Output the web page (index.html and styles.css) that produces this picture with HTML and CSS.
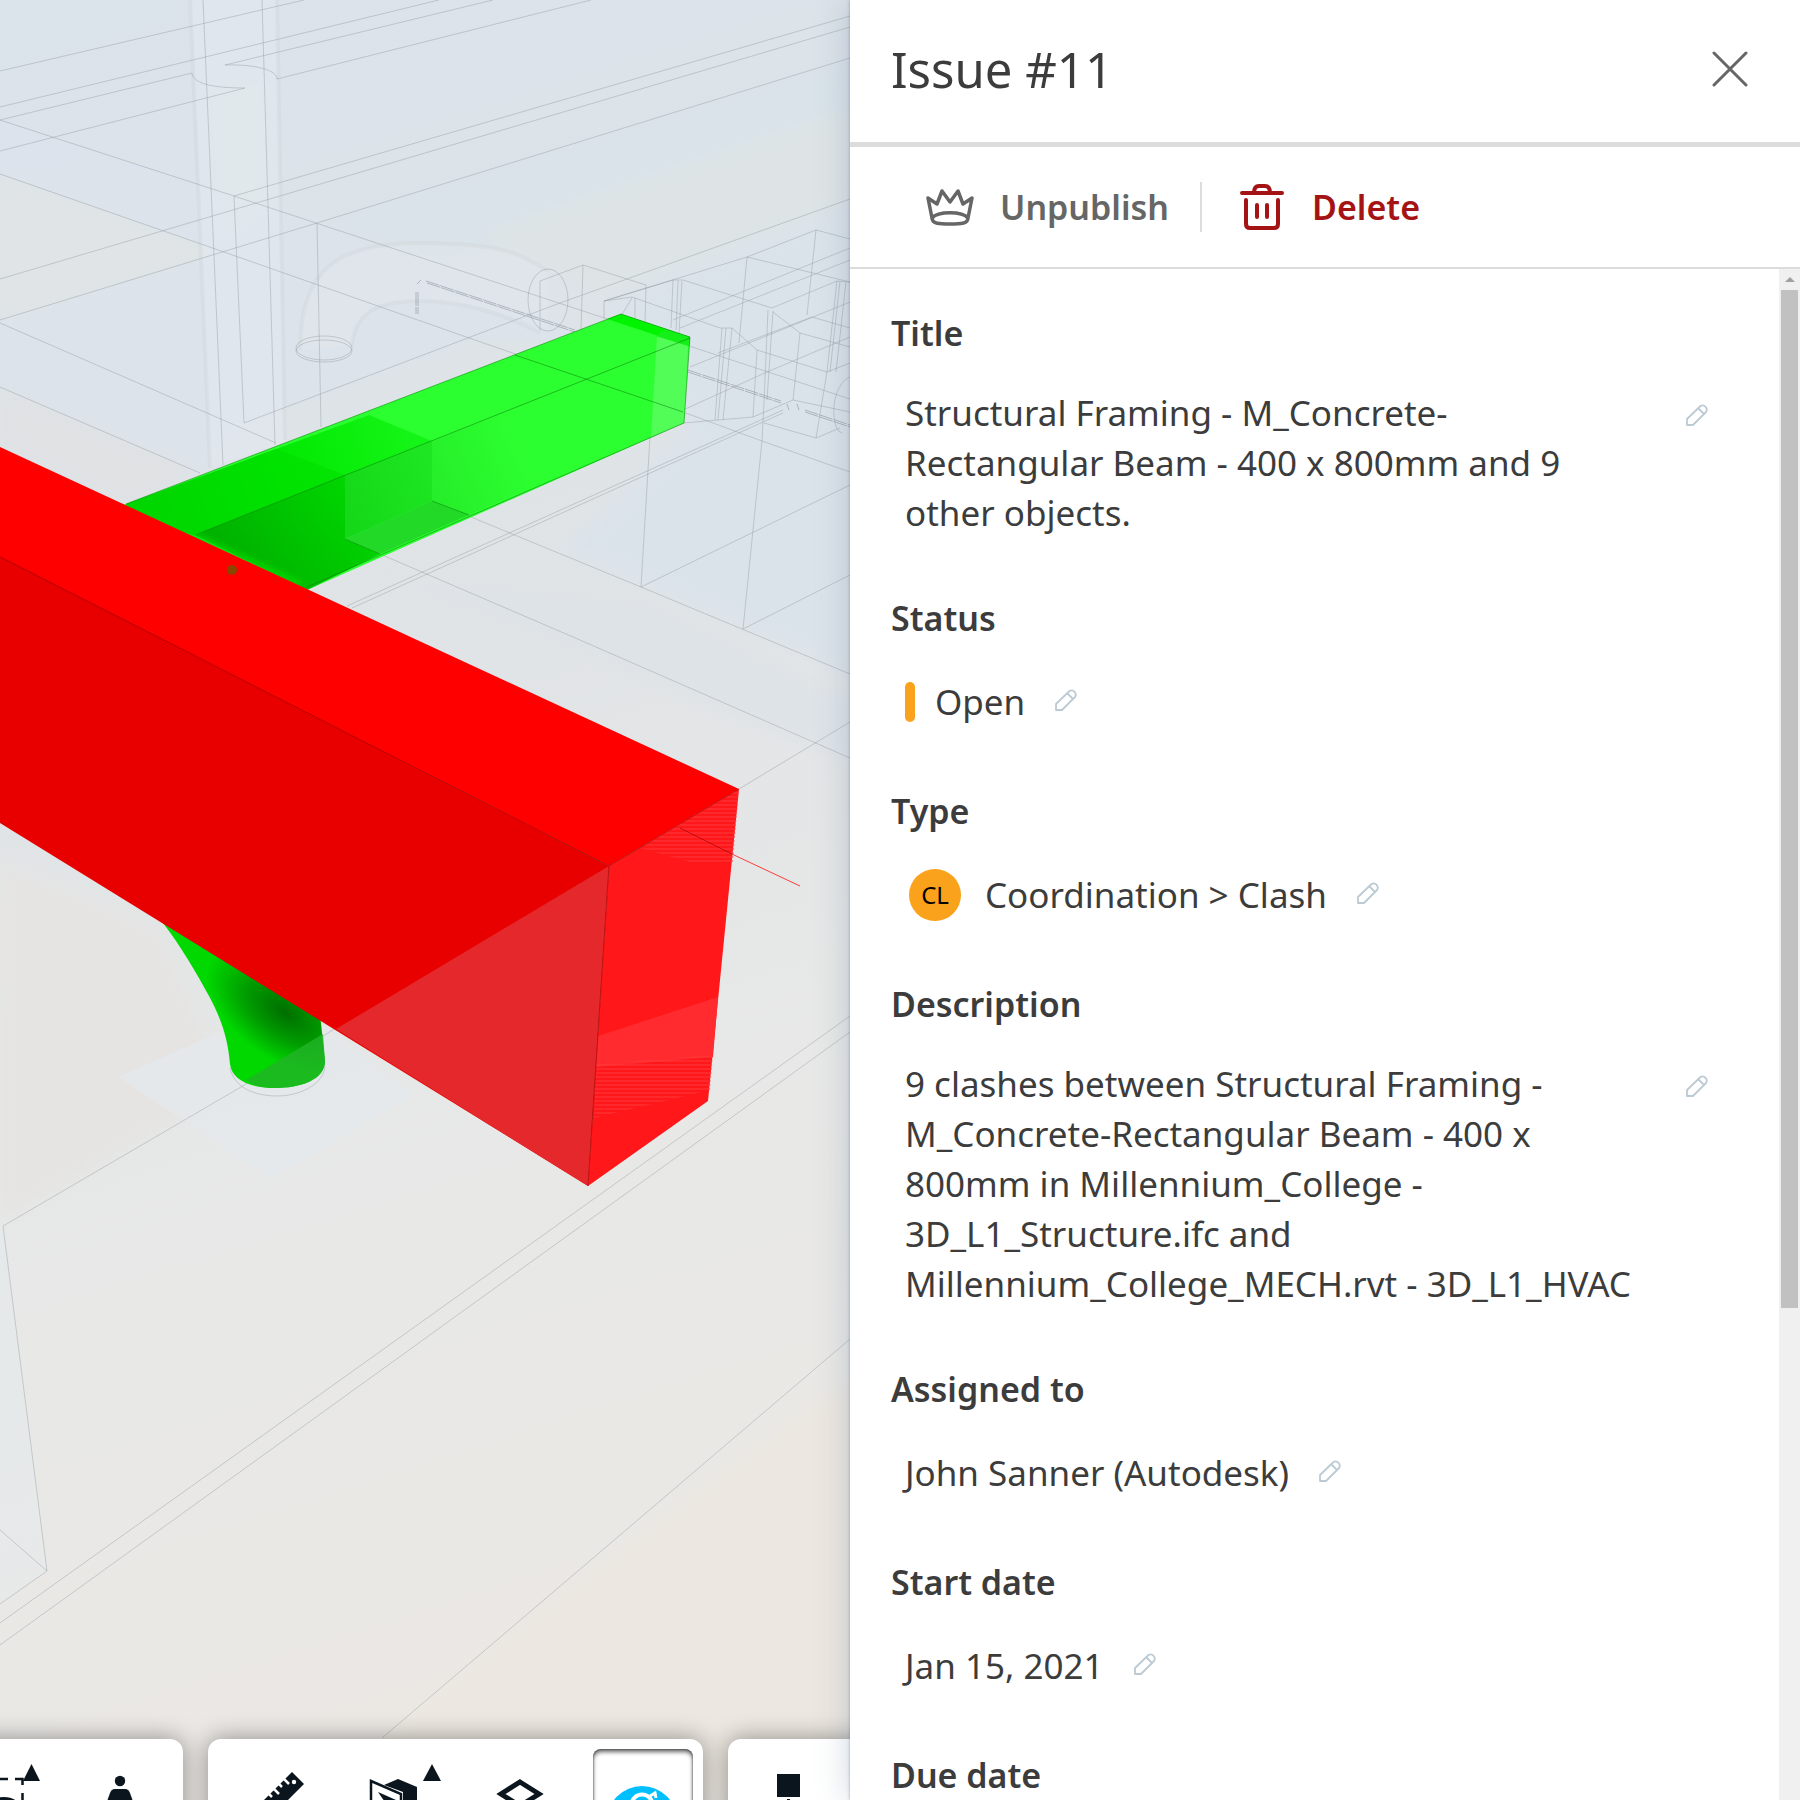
FILE: index.html
```html
<!DOCTYPE html>
<html lang="en">
<head>
<meta charset="utf-8">
<title>Issue #11</title>
<link rel="stylesheet" href="styles.css">
</head>
<body>
<svg class="defs" aria-hidden="true">
  <symbol id="pencil" viewBox="0 0 22 22">
    <path d="M1 21v-6L14.500 2a4.200 4.200 0 0 1 5.500 6L7 21zM12.500 4.500l5.500 5.500" fill="none" stroke="currentColor" stroke-width="1.800" stroke-linejoin="round"/>
  </symbol>
</svg>
<div class="app">
  <main class="stage">
    <svg class="model" viewBox="0 0 850 1800" preserveAspectRatio="xMinYMin slice" role="img" aria-label="3D model view">
      <defs>
        <linearGradient id="sky" x1="0" y1="0" x2=".15" y2="1">
          <stop offset="0" stop-color="#dbe3eb"/>
          <stop offset=".25" stop-color="#dde3e8"/>
          <stop offset=".45" stop-color="#e1e4e6"/>
          <stop offset=".7" stop-color="#e7e8e7"/>
          <stop offset="1" stop-color="#ebe8e4"/>
        </linearGradient>
        <linearGradient id="greenTop" gradientUnits="userSpaceOnUse" x1="150" y1="520" x2="400" y2="420">
          <stop offset="0" stop-color="#00cf00"/>
          <stop offset=".5" stop-color="#00e800"/>
          <stop offset="1" stop-color="#14f416"/>
        </linearGradient>
        <linearGradient id="greenFront" gradientUnits="userSpaceOnUse" x1="240" y1="565" x2="350" y2="475">
          <stop offset="0" stop-color="#00b200"/>
          <stop offset="1" stop-color="#00d800"/>
        </linearGradient>
        <linearGradient id="greenMid" gradientUnits="userSpaceOnUse" x1="345" y1="510" x2="432" y2="470">
          <stop offset="0" stop-color="#14d818"/>
          <stop offset="1" stop-color="#1ee622"/>
        </linearGradient>
        <linearGradient id="greenFar" gradientUnits="userSpaceOnUse" x1="430" y1="480" x2="520" y2="440">
          <stop offset="0" stop-color="#26ee2a"/>
          <stop offset="1" stop-color="#2cff30"/>
        </linearGradient>
        <radialGradient id="pipe" gradientUnits="userSpaceOnUse" cx="0" cy="0" r="1" gradientTransform="translate(285 1012) rotate(35) scale(90 48)">
          <stop offset="0" stop-color="#006e00"/>
          <stop offset=".5" stop-color="#009c00"/>
          <stop offset="1" stop-color="#00d800"/>
        </radialGradient>
        <pattern id="scan" width="8" height="4" patternUnits="userSpaceOnUse"><path d="M0 1H8" stroke="#ff3a3d" stroke-width="1"/></pattern>
        <filter id="soft"><feGaussianBlur stdDeviation="8"/></filter>
        <filter id="glow"><feGaussianBlur stdDeviation="3"/></filter>
      </defs>
      <rect width="850" height="1800" fill="url(#sky)"/>
      <g filter="url(#soft)">
        <path d="M0 174L224 252 0 325z" fill="#e0e4e6"/>
        <path d="M0 387L200 473 126 504 0 447z" fill="#e0e2e4"/>
        <path d="M210 90L262 80 270 200 222 240z" fill="#dfe6e8"/>
        <path d="M317 223L850 60V150L440 255z" fill="#d9e3e9"/>
        <path d="M480 235L850 110V200L604 290z" fill="#dee4e5"/>
        <path d="M604 305L850 200V674L560 550 690 430z" fill="#dbe3ea"/>
        <path d="M0 860L160 930 230 1090 0 1220z" fill="#e5e4e3"/>
        <path d="M400 580L850 760V700L641 600z" fill="#dee3e8"/>
        <path d="M850 1380L382 1738V1800H850z" fill="#ece7e0"/>
      </g>
      <path d="M0 120L234 196 317 223 472 290 600 340 472 339 224 252 0 174z" fill="#dbe3ed" opacity=".5"/>
      <path d="M0 320L224 252 472 339 244 423 200 473 0 387z" fill="#dbe3ed" opacity=".4"/>
      <path d="M191 0L277 0 284 442 210 468z" fill="#e3e9f0" opacity=".5"/>
      <path d="M300 350C300 270 336 242 423 243S520 255 548 271V331C504 310 460 301 417 301S355 314 352 346z" fill="#e1e7ec" opacity=".5"/>
      <path d="M119 1077L290 1000 415 1094 271 1179z" fill="#e4e8ec" opacity=".8"/>
      <path d="M0 1226H3L47 1571 0 1604z" fill="#e6e9eb" opacity=".7"/>
      <g class="edge-soft">
        <path d="M190 0L210 468M277 0L285 440M300 350C300 270 336 242 423 243S520 255 548 271M352 346C355 314 374 302 417 301S504 314 540 333"/>
      </g>
      <g class="edge">
        <path d="M0 71L304 0M0 107L439 0M0 120L192 73C193 83 210 88 245 88M225 65L493 0M0 151L245 88M225 65C255 64 277 70 277 79L591 0"/>
        <path d="M234 196L850 16M0 279L850 27M0 320L317 223 850 58"/>
        <path d="M0 120L234 196 850 399M0 174L224 252 472 339 683 412M0 323L276 443M0 387L200 473"/>
        <path d="M234 196L244 423M317 223L321 427M203 0L223 465M262 0L275 445M244 423L560 303 850 199"/>
        <ellipse cx="324" cy="348" rx="28" ry="12"/>
        <ellipse cx="324" cy="351" rx="28" ry="11"/>
        <ellipse cx="548" cy="300" rx="20" ry="31"/>
        <path d="M540 281L583 265 646 285 645 323M583 265L581 329M540 281V330M604 318V301L673 280H683L772 308M604 301L632 297 720 328H732L757 350 827 372 850 363M621 316L632 298M635 298V318M673 280L671 328M678 281L676 330M682 281L679 333"/>
        <path d="M604 301L747 257 816 230 850 239M816 230L807 315M747 257L739 343M747 257L850 282M768 310L764 402M773 311L767 400M773 312L800 333 793 400M800 333L850 347"/>
        <path d="M850 248L673 320M850 260L680 328M772 308L837 281 850 282M690 367L850 302M718 353L812 317 850 328M850 337L767 372 683 410"/>
        <path d="M722 328L715 420M726 328L718 420M732 328L723 420M757 350L753 417M837 281L827 372M840 281L830 372M846 282L836 372M827 372L816 438 764 423M816 438L840 428M683 423L753 417 793 400 850 412M850 377C830 385 830 430 842 433"/>
        <path d="M764 402L762 441 743 629M650 437L641 587M432 501L641 587 850 674M380 554L580 640 850 758M641 587L850 485M743 629L850 575M739 789L850 722M683 412L762 441 850 472"/>
        <path d="M347 606L783 410M352 608L783 413"/>
        <path d="M336 1028L241 1087 3 1226 47 1571 0 1604M0 1530L47 1571M0 1623L850 1016M0 1645L850 1032M382 1738L850 1339"/>
        <path d="M230 1068C235 1090 258 1096 278 1096S324 1085 325 1066"/>
      </g>
      <g class="centerline">
        <path d="M426 281L575 330M427 283L575 332M688 370L781 401M688 372L781 403M805 410L850 425M805 412L850 427M416 292V314M418 292V314M417 284L421 280M787 404L789 410M797 404L799 410"/>
      </g>
      <path d="M126 504L621 314 690 337 684 423 307 590 100 510z" fill="#2cff30"/>
      <path d="M607 319L621 314 690 337 689 346z" fill="#00f400"/>
      <path d="M657 336L688 346 684 423 651 437z" fill="#52fd57"/>
      <path d="M665 329L690 337 689 346 656 336z" fill="#13ef17"/>
      <path d="M126 504L369 415 432 441 195 535 120 520z" fill="url(#greenTop)"/>
      <path d="M126 504L276 449 345 475 195 535z" fill="#00dc00" opacity=".5"/>
      <path d="M195 535L345 475V539L380 554 307 590z" fill="url(#greenFront)"/>
      <path d="M345 475L432 441V501L345 539z" fill="url(#greenMid)"/>
      <path d="M432 441L600 374V455L469 515 432 501z" fill="url(#greenFar)"/>
      <path d="M345 539L432 501 469 515 380 554z" fill="#22d927"/>
      <path d="M195 535L690 338M515 355L683 412M432 501L469 515M345 539L380 554" class="green-edge"/>
      <path d="M126 504L621 314 690 337 684 423 307 587" class="green-edge"/>
      <path d="M135 510L300 585" stroke="#00d800" stroke-width="7" fill="none" filter="url(#glow)"/>
      <path d="M163 920L320 1014 325 1061C325 1080 300 1088 275 1088S232 1080 230 1064C228 1040 222 1020 209 996S180 945 163 923z" fill="url(#pipe)"/>
      <path d="M246 1080L323 1034 325 1061C325 1080 300 1088 275 1088 262 1088 252 1085 246 1080z" fill="#22b427" opacity=".8"/>
      <path d="M0 447L739 789 609 866 0 557z" fill="#f00"/>
      <path d="M0 556L609 866 588 1186 0 823z" fill="#e80000"/>
      <path d="M609 866L336 1029 588 1186z" fill="#e5282b"/>
      <path d="M739 789L609 866 588 1186 708 1101z" fill="#ff171a"/>
      <path d="M598 1036L718 997 713 1057 596 1067z" fill="#ff2b2e"/>
      <path d="M596 1064L713 1055 710 1090 594 1118zM640 848L739 789 733 862 690 862z" fill="url(#scan)"/>
      <path d="M0 557L609 866 588 1186M609 866L739 789" class="red-edge"/>
      <path d="M680 828L734 855" class="red-edge"/>
      <path d="M734 855L800 886" class="red-ray"/>
      <circle cx="232" cy="570" r="5" fill="#8a4500"/>
    </svg>
    <div class="toolbar" role="toolbar" aria-label="Viewer tools">
      <div class="tool-group tool-group-first">
        <button class="tool" aria-label="Zoom window"><svg viewBox="0 0 100 100"><path d="M52 30h8M67 30h7.500v6M74.500 44v12" fill="none" stroke="currentColor" stroke-width="2.500"/><ellipse cx="56" cy="58" rx="16" ry="10"/><path d="M75 32l8.500-17L92 32z"/></svg></button>
        <button class="tool" aria-label="First person"><svg viewBox="0 0 100 100"><circle cx="47" cy="32" r="5.200"/><path d="M42 40h10c3 0 4 2 5 4l5 14H32l5-14c1-2 2-4 5-4z"/></svg></button>
      </div>
      <div class="tool-group">
        <button class="tool" aria-label="Measure"><svg viewBox="0 0 100 100"><path d="M74 23L86 35 50 71 38 59z"/><circle cx="76" cy="33" r="2.200" fill="#fff"/><path d="M66 30l5 5M61 35l3 3M56 40l5 5M51 45l3 3" stroke="#fff" stroke-width="2.500"/></svg></button>
        <button class="tool" aria-label="Section"><svg viewBox="0 0 100 100"><path d="M41 36l14-6 19 8v20H60V43z"/><path d="M28 32l30 13v30L28 62z" fill="#fff" stroke="currentColor" stroke-width="2.500"/><path d="M35 43l18 8v18z"/></svg></button>
        <button class="tool" aria-label="Levels"><svg viewBox="0 0 100 100"><path d="M52 33L71 45 52 57 33 45z" fill="none" stroke="currentColor" stroke-width="5"/></svg></button>
        <button class="tool tool-active" aria-label="Issues" aria-pressed="true"><svg viewBox="0 0 100 100"><circle cx="49" cy="72" r="35"/><circle cx="49" cy="56" r="10.500" fill="none" stroke="#fff" stroke-width="4"/><path d="M57 47l5-3 1 5" fill="none" stroke="#fff" stroke-width="3"/></svg></button>
        <svg class="group-caret" viewBox="0 0 18 17" aria-hidden="true"><path d="M0 17L9 0l9 17z"/></svg>
      </div>
      <div class="tool-group">
        <button class="tool" aria-label="Model browser"><svg viewBox="0 0 100 100"><path d="M39 25h23v23H39zM49 50h3v20h-3z"/></svg></button>
        <button class="tool" aria-label="Properties"></button>
      </div>
    </div>
  </main>
  <aside class="panel">
    <header class="panel-head">
      <h1>Issue #11</h1>
      <button class="close" aria-label="Close"><svg viewBox="0 0 36 36"><path d="M2 2l32 32M34 2L2 34" fill="none" stroke="currentColor" stroke-width="3" stroke-linecap="round"/></svg></button>
    </header>
    <div class="actions">
      <button class="action"><svg class="crown" viewBox="0 0 48 38" fill="none" stroke="currentColor" stroke-width="3.500" stroke-linejoin="round" stroke-linecap="round"><path d="M6 30L2 10l9 6 5-13 8 11 8-11 5 13 9-6-4 20M6 30c6-7 30-7 36 0M6 30c0 6 8 6 18 6s18 0 18-6"/></svg>Unpublish</button>
      <button class="action action-delete"><svg class="trash" viewBox="0 0 44 46" fill="none" stroke="currentColor" stroke-width="4" stroke-linecap="round" stroke-linejoin="round"><path d="M2 9h40M14 9c0-5 2-7 5-7h6c3 0 5 2 5 7M6 16v24c0 3 2 4 4 4h24c2 0 4-1 4-4V16M17 21v12M27 21v12"/></svg>Delete</button>
    </div>
    <div class="panel-body">
      <div class="fields">
        <section class="field">
          <h2>Title</h2>
          <div class="value value-long"><p>Structural Framing - M_Concrete-<br>Rectangular Beam - 400 x 800mm and 9<br>other objects.</p><button class="edit" aria-label="Edit title"><svg><use href="#pencil"/></svg></button></div>
        </section>
        <section class="field">
          <h2>Status</h2>
          <div class="value"><span class="status-bar"></span><p>Open</p><button class="edit" aria-label="Edit status"><svg><use href="#pencil"/></svg></button></div>
        </section>
        <section class="field">
          <h2>Type</h2>
          <div class="value"><span class="badge">CL</span><p>Coordination &gt; Clash</p><button class="edit" aria-label="Edit type"><svg><use href="#pencil"/></svg></button></div>
        </section>
        <section class="field">
          <h2>Description</h2>
          <div class="value value-long"><p>9 clashes between Structural Framing -<br>M_Concrete-Rectangular Beam - 400 x<br>800mm in Millennium_College -<br>3D_L1_Structure.ifc and<br>Millennium_College_MECH.rvt - 3D_L1_HVAC</p><button class="edit" aria-label="Edit description"><svg><use href="#pencil"/></svg></button></div>
        </section>
        <section class="field">
          <h2>Assigned to</h2>
          <div class="value"><p>John Sanner (Autodesk)</p><button class="edit" aria-label="Edit assignee"><svg><use href="#pencil"/></svg></button></div>
        </section>
        <section class="field">
          <h2>Start date</h2>
          <div class="value"><p>Jan 15, 2021</p><button class="edit" aria-label="Edit start date"><svg><use href="#pencil"/></svg></button></div>
        </section>
        <section class="field">
          <h2>Due date</h2>
        </section>
      </div>
      <div class="scrollbar" aria-hidden="true"><span class="scroll-up"></span><span class="scroll-thumb"></span></div>
    </div>
  </aside>
</div>
</body>
</html>
```
FILE: styles.css
```css
* { box-sizing: border-box; }
body { margin: 0; font-family: "Noto Sans", sans-serif; color: #3c3c3c; background: #fff; }
button { padding: 0; border: 0; background: none; font: inherit; color: inherit; cursor: pointer; }
h1, h2, p { margin: 0; }
svg { display: block; }
.defs { display: none; }

.app { display: grid; grid-template-columns: 17fr 19fr; height: 100vh; overflow: hidden; }

/* Model view */
.stage { position: relative; min-width: 0; overflow: hidden; background: #e4e6e7; }
.model { width: 100%; height: 100%; }
.edge, .edge-soft, .centerline { fill: none; }
.edge { stroke: #8d959c; stroke-opacity: .4; stroke-width: 1; }
.edge-soft { stroke: #cfd4d7; stroke-opacity: .35; stroke-width: 4; }
.centerline { stroke: #8d959c; stroke-opacity: .6; stroke-width: 1; stroke-dasharray: 14 1; }
.green-edge { fill: none; stroke: #087a08; stroke-opacity: .5; stroke-width: 1; }
.red-edge { fill: none; stroke: #900; stroke-opacity: .6; stroke-width: 1; }
.red-ray { fill: none; stroke: #ff3b3b; stroke-width: 1; }

.toolbar { position: absolute; left: 0; bottom: 0; display: flex; gap: 25px; height: 61px; }
.tool-group { position: relative; display: flex; flex: none; gap: 25px; height: 120px; padding: 10px; border-radius: 13px; background: #fff; box-shadow: 0 0 24px rgba(0, 0, 0, .4); }
.tool-group-first { margin-left: -62px; }
.tool { width: 100px; height: 100px; border-radius: 8px; color: #0b151e; }
.tool svg { width: 100%; height: 100%; fill: currentColor; }
.tool-active { color: #00bfff; box-shadow: inset 0 3px 4px rgba(0, 0, 0, .6), inset 0 0 2px rgba(0, 0, 0, .7); }
.group-caret { position: absolute; top: 25px; left: 215px; width: 18px; height: 17px; fill: #0b151e; }

/* Issue panel */
.panel { position: relative; display: flex; flex-direction: column; min-width: 0; min-height: 0; background: #fff; box-shadow: 0 0 32px rgba(90, 115, 150, .3), 0 0 3px rgba(40, 60, 90, .4); }
.panel-head { display: flex; flex: none; align-items: center; justify-content: space-between; height: 147px; padding: 0 52px 5px 41px; border-bottom: 5px solid #dcdcdc; }
h1 { font-size: 49px; font-weight: 400; line-height: 60px; }
.close { color: #666; }
.close svg { width: 36px; height: 36px; }
.actions { display: flex; flex: none; align-items: center; height: 122px; padding-left: 76px; border-bottom: 2px solid #dcdcdc; }
.action { display: flex; align-items: center; gap: 26px; height: 50px; font-size: 34px; font-weight: 600; color: #666; }
.action-delete { gap: 28px; margin-left: 31px; padding-left: 38px; border-left: 2px solid #dcdcdc; color: #a51414; }
.crown { width: 48px; height: 38px; }
.trash { width: 44px; height: 46px; }

.panel-body { display: flex; flex: 1; min-height: 0; }
.fields { flex: 1; min-width: 0; padding: 44px 71px 0 41px; overflow: hidden; }
.field { margin-bottom: 60px; }
h2 { margin-bottom: 35px; font-size: 34px; font-weight: 600; line-height: 40px; }
.value { display: flex; align-items: center; height: 58px; padding-left: 14px; font-size: 35px; line-height: 50px; }
.value-long { align-items: flex-start; justify-content: space-between; height: auto; }
.edit { flex: none; margin: 0 0 4px 30px; color: #bccad4; }
.value-long .edit { margin: 16px 0 0 20px; }
.edit svg { width: 22px; height: 22px; }
.status-bar { width: 10px; height: 40px; margin-right: 20px; border-radius: 5px; background: #faa21b; }
.badge { width: 52px; height: 52px; margin: 0 24px 0 4px; border-radius: 50%; background: #faa21b; color: #000; font-size: 24px; line-height: 52px; text-align: center; }

.scrollbar { display: grid; grid-template-rows: 21px 1018fr 492fr; flex: none; width: 21px; padding: 0 2px; background: #f0f0f0; }
.scroll-up { align-self: center; justify-self: center; border: 5px solid transparent; border-top: 0; border-bottom-color: #a0a0a0; }
.scroll-thumb { background: #c1c1c1; }
```
